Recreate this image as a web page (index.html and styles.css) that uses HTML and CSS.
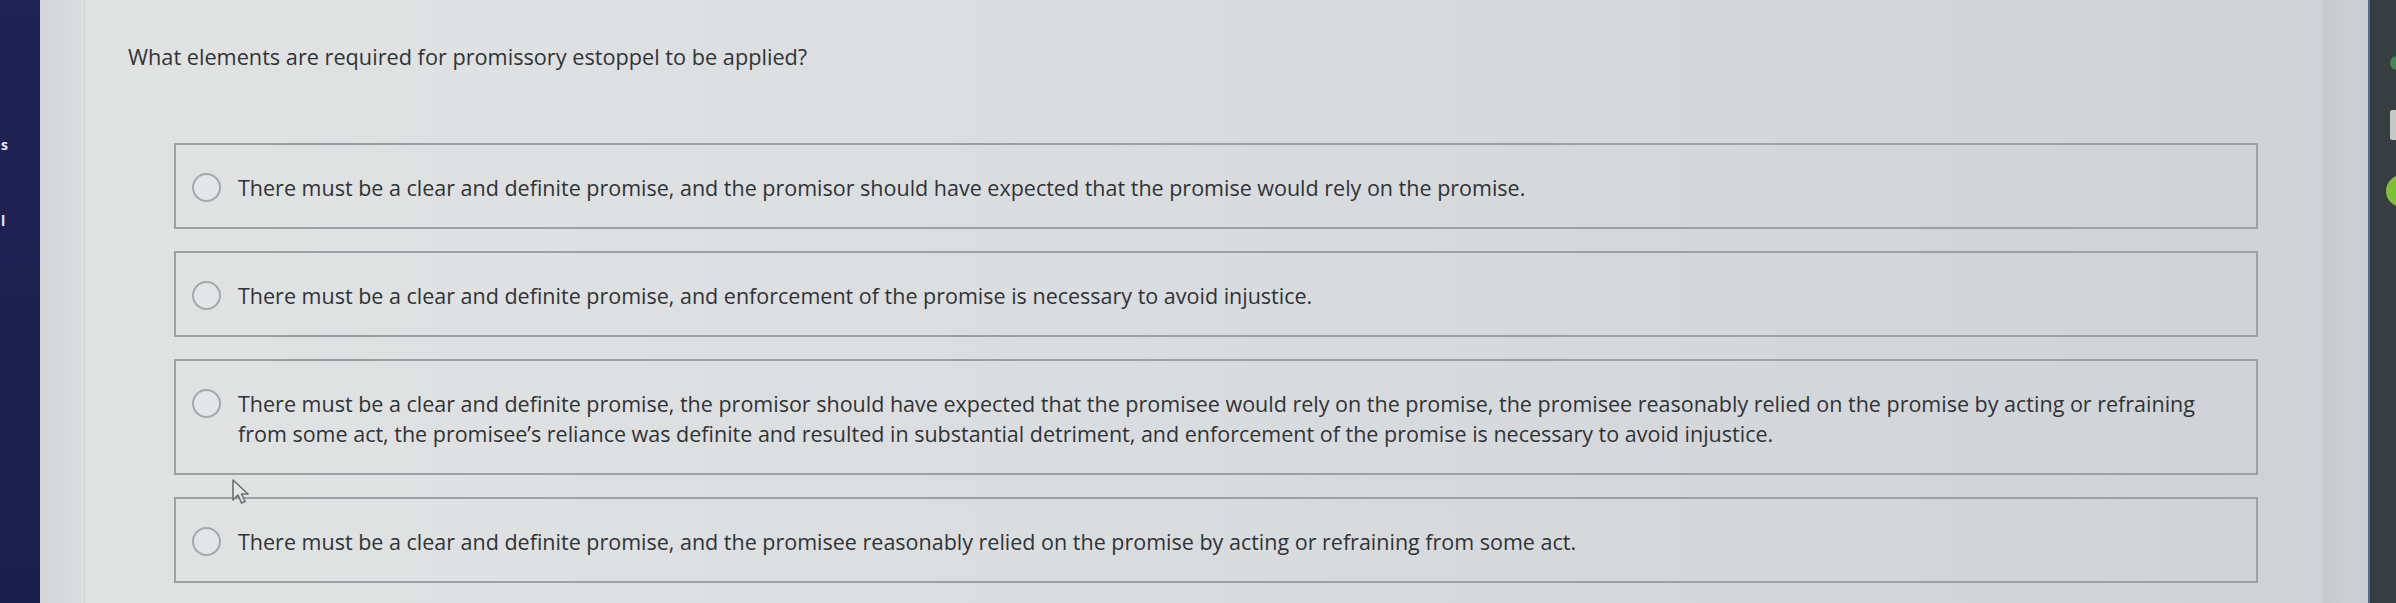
FILE: index.html
```html
<!DOCTYPE html>
<html lang="en">
<head>
<meta charset="utf-8">
<title>Promissory estoppel question</title>
<link rel="stylesheet" href="styles.css">
</head>
<body>
<div class="screen">
  <aside class="nav-left">
    <span class="nav-glyph">s</span>
    <span class="nav-glyph nav-glyph-2">l</span>
  </aside>
  <div class="gutter-left"></div>
  <main class="panel">
    <p class="question">What elements are required for promissory estoppel to be applied?</p>
    <ul class="options">
      <li class="option"><span class="radio"></span><span class="label">There must be a clear and definite promise, and the promisor should have expected that the promise would rely on the promise.</span></li>
      <li class="option"><span class="radio"></span><span class="label">There must be a clear and definite promise, and enforcement of the promise is necessary to avoid injustice.</span></li>
      <li class="option"><span class="radio"></span><span class="label">There must be a clear and definite promise, the promisor should have expected that the promisee would rely on the promise, the promisee reasonably relied on the promise by acting or refraining from some act, the promisee’s reliance was definite and resulted in substantial detriment, and enforcement of the promise is necessary to avoid injustice.</span></li>
      <li class="option"><span class="radio"></span><span class="label">There must be a clear and definite promise, and the promisee reasonably relied on the promise by acting or refraining from some act.</span></li>
    </ul>
  </main>
  <div class="gutter-right"></div>
  <aside class="nav-right">
    <span class="dot dot-small"></span>
    <span class="chip"></span>
    <span class="dot dot-big"></span>
  </aside>
  <svg class="cursor" width="20" height="28" viewBox="0 0 20 28" aria-hidden="true">
    <path d="M2 2 L2 22 L7 17 L10.5 25 L14 23.5 L10.5 16 L17 16 Z" fill="#e4e6e7" stroke="#6d7073" stroke-width="1.6" stroke-linejoin="round"/>
  </svg>
</div>
</body>
</html>
```

FILE: styles.css
```css
html, body {
  margin: 0;
  padding: 0;
  width: 2396px;
  height: 603px;
  overflow: hidden;
  background: #d6d9dc;
}

.screen {
  position: relative;
  display: flex;
  width: 2396px;
  height: 603px;
  font-family: "Open Sans", "Noto Sans", sans-serif;
  color: #303336;
}

.nav-left {
  width: 40px;
  flex: none;
  background: linear-gradient(180deg, #1f2254 0%, #1c1f4c 100%);
  overflow: hidden;
  display: flex;
  flex-direction: column;
  align-items: flex-start;
}

.nav-glyph {
  color: #e8e9f2;
  font-family: "Open Sans", sans-serif;
  font-weight: 700;
  font-size: 14px;
  line-height: 18px;
  margin: 136px 0 0 1px;
}

.nav-glyph-2 {
  margin: 58px 0 0 1px;
}

.gutter-left {
  width: 45px;
  flex: none;
  background: linear-gradient(90deg, #d3d6d7 0%, #dcdedf 100%);
  box-shadow: inset -1px 0 0 #cfd2d3;
}

.panel {
  flex: 1;
  padding: 42px 65px 0 43px;
  background: linear-gradient(90deg, #e1e3e3 0%, #dadddf 45%, #cfd3d7 100%);
}

.question {
  margin: 0;
  font-size: 21.7px;
  line-height: 30px;
  color: #303336;
}

.options {
  list-style: none;
  margin: 71px 0 0 46px;
  padding: 0;
  display: flex;
  flex-direction: column;
  gap: 22px;
}

.option {
  display: flex;
  align-items: flex-start;
  gap: 17px;
  border: 2px solid #9ea1a4;
  padding: 28px 53px 24px 16px;
  font-size: 21.5px;
  line-height: 30px;
}

.radio {
  flex: none;
  width: 25px;
  height: 25px;
  margin-top: 0;
  border: 2px solid #a6a9ac;
  border-radius: 50%;
  background: #e3e5e6;
}

.label {
  color: #303336;
}

.gutter-right {
  width: 45px;
  flex: none;
  background: linear-gradient(90deg, #c6cacd 0%, #cdd1d4 60%, #c9cdd0 100%);
}

.nav-right {
  width: 28px;
  flex: none;
  background: #383d42;
  box-shadow: inset 2px 0 0 #4a6c93;
  overflow: hidden;
  display: flex;
  flex-direction: column;
  align-items: flex-start;
}

.dot {
  display: block;
  border-radius: 50%;
  background: #6dbb3c;
}

.dot-small {
  width: 14px;
  height: 14px;
  margin: 56px 0 0 22px;
  background: #3e8d4a;
}

.chip {
  display: block;
  width: 8px;
  height: 30px;
  margin: 40px 0 0 22px;
  background: #c9c9c4;
  border-radius: 2px;
}

.dot-big {
  width: 32px;
  height: 32px;
  margin: 35px 0 0 18px;
  background: #7fbf3a;
}

.cursor {
  position: absolute;
  left: 231px;
  top: 478px;
}
```
